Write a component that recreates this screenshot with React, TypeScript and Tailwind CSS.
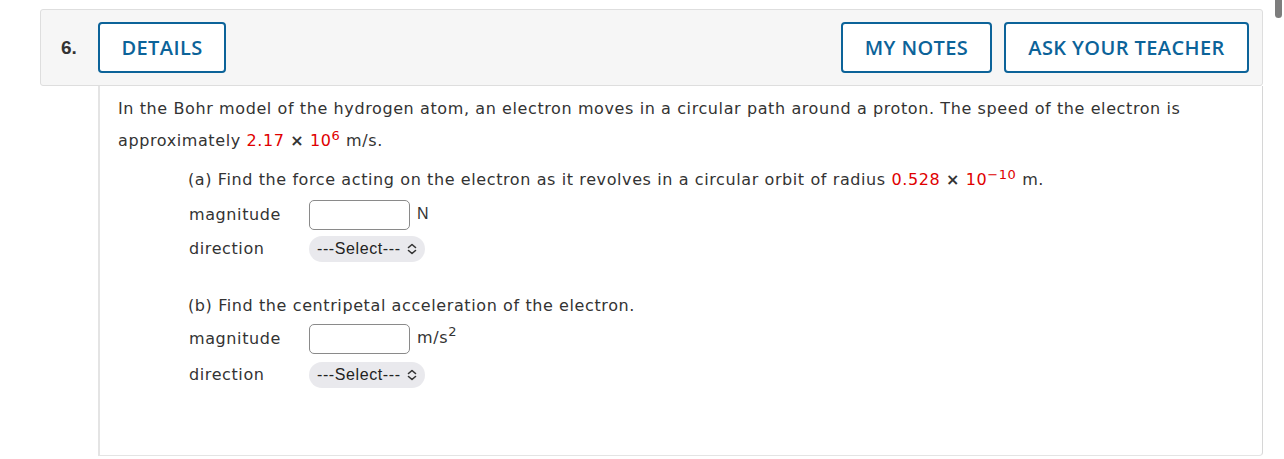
import React from "react";

const verdana = { fontFamily: '"DejaVu Sans", Verdana, sans-serif', letterSpacing: "0.6px" } as React.CSSProperties;

function Btn({ children, w }: { children: React.ReactNode; w: string }) {
  return (
    <button
      className={`h-[51px] ${w} rounded-[4px] border-2 border-[#0c6399] bg-white pt-[1px] text-[20px] font-semibold tracking-[0.4px] text-[#0c6399] flex items-center justify-center`}
      style={{ fontFamily: '"Open Sans", sans-serif' }}
    >
      {children}
    </button>
  );
}

function Select() {
  return (
    <div
      className="flex h-[26px] w-[116px] items-center rounded-full bg-[#e9e9ed] pl-[8px] text-[16px] text-[#222]"
      style={{ fontFamily: '"Liberation Sans", Arial, sans-serif' }}
    >
      <span>---Select---</span>
      <svg className="ml-[6px]" width="10" height="12" viewBox="0 0 10 12" fill="none" stroke="#333" strokeWidth="1.6" strokeLinecap="round" strokeLinejoin="round">
        <path d="M1.5 4.5 L5 1.5 L8.5 4.5" />
        <path d="M1.5 7.5 L5 10.5 L8.5 7.5" />
      </svg>
    </div>
  );
}

function Row({ label, children }: { label: string; children: React.ReactNode }) {
  return (
    <div className="flex items-center">
      <div className="w-[120px] text-[16px] text-[#333]" style={verdana}>{label}</div>
      {children}
    </div>
  );
}

function Input() {
  return <div className="h-[30px] w-[101px] rounded-[5px] border border-[#8a8a8a] bg-white" />;
}

export default function App() {
  return (
    <div className="relative min-h-[459px] bg-white pl-[40px] pr-[21px] pt-[9px]">
      <div className="absolute right-[2px] top-0 h-[18px] w-[7px] rounded-b-full bg-[#7d7d7d]" />
      <div className="flex h-[77px] items-center rounded-[3px] border border-[#dedede] bg-[#f6f6f6] pl-[20px] pr-[13px]">
        <span className="mt-[2px] w-[37px] text-[19px] font-bold text-[#333]" style={{ fontFamily: '"Liberation Sans", Arial, sans-serif' }}>6.</span>
        <Btn w="w-[128px]">DETAILS</Btn>
        <div className="flex-1" />
        <Btn w="w-[151px]">MY NOTES</Btn>
        <div className="w-[12px]" />
        <Btn w="w-[245px]">ASK YOUR TEACHER</Btn>
      </div>
      <div className="ml-[58px] h-[370px] rounded-br-[4px] border-b border-l-2 border-r border-[#e4e4e4] border-r-[#d6d6d6] pl-[18px] pr-[40px] pt-[7px] text-[16px] text-[#333]" style={verdana}>
        <p className="leading-[32px]">
          In the Bohr model of the hydrogen atom, an electron moves in a circular path around a proton. The speed of the electron is approximately{" "}
          <span className="text-[#e00000]">2.17</span> <span className="font-bold">×</span>{" "}
          <span className="text-[#e00000]">10<sup className="text-[13px]">6</sup></span> m/s.
        </p>
        <div className="ml-[70px] mt-[7px]">
          <p className="leading-[32px]">
            (a) Find the force acting on the electron as it revolves in a circular orbit of radius{" "}
            <span className="text-[#e00000]">0.528</span> <span className="font-bold">×</span>{" "}
            <span className="text-[#e00000]">10<sup className="text-[13px]">−10</sup></span> m.
          </p>
          <div className="mt-[4px] flex flex-col gap-[6px] pl-[1px]">
            <Row label="magnitude">
              <Input />
              <span className="ml-[7px] -mt-[2px] text-[16px] text-[#333]" style={{ fontFamily: '"Liberation Sans", Arial, sans-serif' }}>N</span>
            </Row>
            <Row label="direction">
              <Select />
            </Row>
          </div>
          <p className="mt-[28px] leading-[32px]">(b) Find the centripetal acceleration of the electron.</p>
          <div className="mt-[2px] flex flex-col gap-[8px] pl-[1px]">
            <Row label="magnitude">
              <Input />
              <span className="ml-[7px] -mt-[3px] text-[16px] text-[#333]">m/s<sup className="text-[13px]">2</sup></span>
            </Row>
            <Row label="direction">
              <Select />
            </Row>
          </div>
        </div>
      </div>
    </div>
  );
}
